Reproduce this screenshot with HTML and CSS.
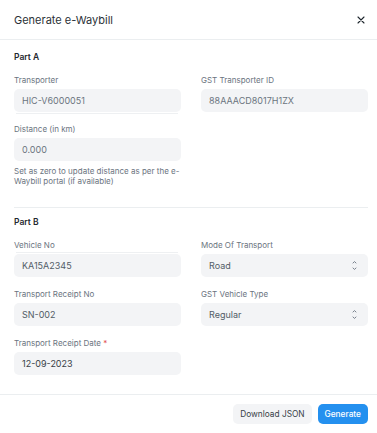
FILE: index.html
```html
<!DOCTYPE html>
<html lang="en">
<head>
  <meta charset="UTF-8" />
  <meta name="viewport" content="width=device-width, initial-scale=1.0"/>
  <title>Generate e-Waybill</title>
  <link rel="stylesheet" href="styles.css">
</head>
<body>
  <div class="modal">
    <div class="modal-header">
      <div class="modal-title">Generate e-Waybill</div>
      <button class="btn-close" aria-label="Close">
        <svg width="8" height="8" viewBox="0 0 8 8"><path d="M1 1L7 7M7 1L1 7" stroke="#1f272e" stroke-width="1.1" stroke-linecap="round"/></svg>
      </button>
    </div>

    <div class="modal-body">
      <div class="section">
        <div class="section-head">Part A</div>
        <div class="row">
          <div class="form-group">
            <div class="control-label">Transporter</div>
            <div class="control-input muted link-below">HIC-V6000051</div>
          </div>
          <div class="form-group">
            <div class="control-label">GST Transporter ID</div>
            <div class="control-input muted">88AAACD8017H1ZX</div>
          </div>
        </div>
        <div class="row">
          <div class="form-group">
            <div class="control-label">Distance (in km)</div>
            <div class="control-input muted">0.000</div>
            <div class="help-box">Set as zero to update distance as per the e-Waybill portal (if available)</div>
          </div>
        </div>
      </div>

      <div class="section section-b">
        <div class="section-head">Part B</div>
        <div class="row">
          <div class="form-group">
            <div class="control-label">Vehicle No</div>
            <div class="control-input link-above">KA15A2345</div>
          </div>
          <div class="form-group">
            <div class="control-label">Mode Of Transport</div>
            <div class="control-input select">
              <span>Road</span>
              <svg width="5" height="11" viewBox="0 0 5 11"><path d="M1 3L2.5 1.6L4 3M1 8L2.5 9.4L4 8" fill="none" stroke="#6b7480" stroke-width="0.9" stroke-linecap="round" stroke-linejoin="round"/></svg>
            </div>
          </div>
        </div>
        <div class="row">
          <div class="form-group">
            <div class="control-label">Transport Receipt No</div>
            <div class="control-input">SN-002</div>
          </div>
          <div class="form-group">
            <div class="control-label">GST Vehicle Type</div>
            <div class="control-input select">
              <span>Regular</span>
              <svg width="5" height="11" viewBox="0 0 5 11"><path d="M1 3L2.5 1.6L4 3M1 8L2.5 9.4L4 8" fill="none" stroke="#6b7480" stroke-width="0.9" stroke-linecap="round" stroke-linejoin="round"/></svg>
            </div>
          </div>
        </div>
        <div class="row">
          <div class="form-group">
            <div class="control-label">Transport Receipt Date <span class="reqd">*</span></div>
            <div class="control-input dark">12-09-2023</div>
          </div>
        </div>
      </div>
    </div>

    <div class="modal-footer">
      <button class="btn btn-default">Download JSON</button>
      <button class="btn btn-primary">Generate</button>
    </div>
  </div>
</body>
</html>
```

FILE: styles.css
```css
body {
  margin: 0;
  background: #fff;
  font-family: Inter, "Noto Sans", sans-serif;
  color: #1f272e;
}

.modal {
  width: 377px;
  display: flex;
  flex-direction: column;
}

.modal-header {
  height: 39px;
  flex-shrink: 0;
  padding: 0 12px 0 14px;
  display: flex;
  align-items: center;
  justify-content: space-between;
  border-bottom: 1px solid #ebeef0;
}

.modal-title {
  font-size: 11px;
  color: #2c3238;
}

.btn-close {
  border: none;
  background: none;
  padding: 0;
  width: 8px;
  height: 8px;
  display: flex;
}

.modal-body {
  padding: 0 9px 0 14px;
}

.section {
  padding: 12px 0 9px;
  border-bottom: 1px solid #ebeef0;
}

.section-b {
  padding: 9px 0 7px;
  border-bottom: none;
}

.section-head {
  font-size: 8.5px;
  font-weight: 600;
  line-height: 11px;
  margin-bottom: 12px;
}

.row {
  display: grid;
  grid-template-columns: 1fr 1fr;
  column-gap: 20px;
}

.form-group {
  margin-bottom: 12px;
}

.control-label {
  font-size: 8px;
  line-height: 10px;
  color: #6b7480;
  margin-bottom: 4px;
}

.reqd {
  color: #e24c4c;
}

.control-input {
  position: relative;
  height: 23px;
  box-sizing: border-box;
  padding: 0 8px;
  background: #f3f4f6;
  border-radius: 5px;
  font-size: 9px;
  color: #525c66;
  display: flex;
  align-items: center;
}

.control-input.muted {
  color: #6b7480;
}

.control-input.dark {
  color: #383f46;
}

/* faint dropdown edge left by the link fields */
.link-below::after,
.link-above::before {
  content: "";
  position: absolute;
  left: 2px;
  right: 3px;
  height: 1px;
  background: #eef0f2;
}

.link-below::after {
  bottom: -2px;
}

.link-above::before {
  top: -2px;
}

.select {
  justify-content: space-between;
  padding-right: 11px;
}

.help-box {
  font-size: 8px;
  line-height: 10px;
  color: #6b7480;
  margin-top: 5px;
}

.modal-footer {
  height: 38px;
  flex-shrink: 0;
  border-top: 1px solid #ebeef0;
  padding: 0 9px 0 14px;
  display: flex;
  align-items: center;
  justify-content: flex-end;
  gap: 6px;
}

.btn {
  height: 20px;
  border: none;
  border-radius: 5px;
  font-family: Inter, "Noto Sans", sans-serif;
  font-size: 8.3px;
  padding: 0 7px;
}

.btn-default {
  background: #f3f4f6;
  color: #383f46;
}

.btn-primary {
  background: #2490ef;
  color: #fff;
  font-weight: 500;
}
```
